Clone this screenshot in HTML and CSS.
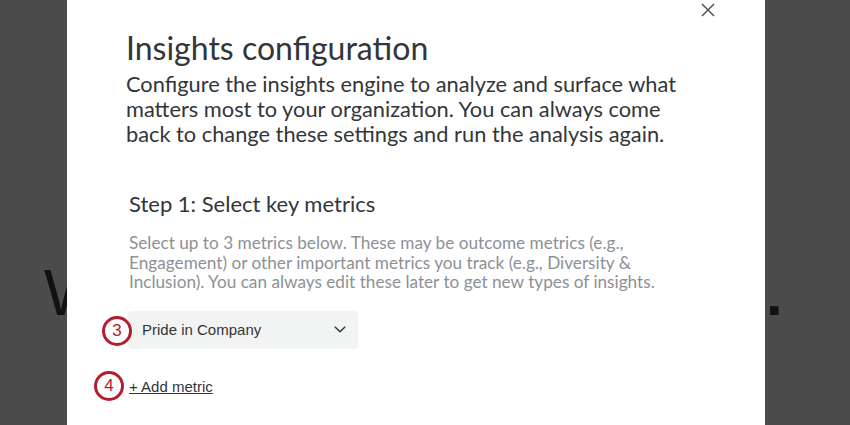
FILE: index.html
```html
<!DOCTYPE html>
<html lang="en">
<head>
<meta charset="utf-8">
<title>Insights configuration</title>
<link rel="stylesheet" href="styles.css">
</head>
<body>
<div class="backdrop">
  <span class="bg-letter">W</span>
  <span class="bg-dot">.</span>
</div>
<div class="modal">
  <button class="close" aria-label="Close">
    <svg width="14" height="14" viewBox="0 0 14 14"><path d="M1 1 L13 13 M13 1 L1 13" stroke="#545454" stroke-width="1.5" fill="none"/></svg>
  </button>
  <h1 class="title">Insights configuration</h1>
  <p class="desc">Configure the insights engine to analyze and surface what matters most to your organization. You can always come back to change these settings and run the analysis again.</p>
  <section class="step">
    <h2 class="step-title">Step 1: Select key metrics</h2>
    <p class="step-help">Select up to 3 metrics below. These may be outcome metrics (e.g., Engagement) or other important metrics you track (e.g., Diversity &amp; Inclusion). You can always edit these later to get new types of insights.</p>
    <div class="metric-row">
      <span class="badge badge-3">3</span>
      <div class="select">
        <span class="select-text">Pride in Company</span>
        <svg class="chev" width="12" height="7" viewBox="0 0 12 7"><path d="M0.8 0.8 L6 5.8 L11.2 0.8" stroke="#32363a" stroke-width="1.5" fill="none"/></svg>
      </div>
    </div>
    <div class="add-row">
      <span class="badge badge-4">4</span>
      <a class="add-link" href="#">+ Add metric</a>
    </div>
  </section>
</div>
</body>
</html>
```
FILE: styles.css
```css
html, body {
  margin: 0;
  padding: 0;
  width: 850px;
  height: 425px;
  overflow: hidden;
}
body {
  background: #4b4b4b;
  position: relative;
  font-family: Lato, "Open Sans", sans-serif;
}
.backdrop {
  position: absolute;
  inset: 0;
}
.bg-letter {
  position: absolute;
  left: 44px;
  top: 261px;
  font-family: "Liberation Sans", Arial, sans-serif;
  font-size: 64px;
  line-height: 64px;
  color: #111;
}
.bg-dot {
  position: absolute;
  left: 766px;
  top: 263px;
  font-family: "Liberation Sans", Arial, sans-serif;
  font-weight: bold;
  font-size: 60px;
  line-height: 64px;
  color: #111;
}
.modal {
  position: relative;
  margin-left: 67px;
  width: 698px;
  height: 425px;
  background: #fff;
  box-sizing: border-box;
  padding: 28px 40px 0 59px;
}
.close {
  position: absolute;
  top: 3px;
  left: 634px;
  width: 14px;
  height: 14px;
  padding: 0;
  border: 0;
  background: none;
  display: block;
}
.close svg { display: block; }
.title {
  margin: 0;
  font-size: 32px;
  line-height: 40px;
  font-weight: 400;
  color: #32363a;
}
.desc {
  margin: 3px 0 0;
  font-size: 21.8px;
  line-height: 25px;
  color: #32363a;
  width: 560px;
}
.step {
  margin: 44px 0 0 3px;
}
.step-title {
  margin: 0;
  font-size: 22px;
  line-height: 28px;
  font-weight: 400;
  color: #32363a;
}
.step-help {
  margin: 15px 0 0;
  font-size: 17.2px;
  line-height: 19.5px;
  color: #8c9196;
  width: 545px;
}
.metric-row {
  position: relative;
  margin-top: 19px;
  margin-left: -1px;
}
.select {
  width: 230px;
  height: 38px;
  box-sizing: border-box;
  background: #f2f3f3;
  border-radius: 4px;
  display: flex;
  align-items: center;
  justify-content: space-between;
  padding: 0 12px 0 14px;
}
.select-text {
  font-family: "Liberation Sans", Arial, sans-serif;
  font-size: 15px;
  color: #32363a;
}
.chev { display: block; }
.badge {
  position: absolute;
  width: 30px;
  height: 30px;
  box-sizing: border-box;
  border: 3px solid #b71c2c;
  border-radius: 50%;
  background: #fff;
  color: #b71c2c;
  font-family: "Liberation Sans", Arial, sans-serif;
  font-size: 17px;
  line-height: 24px;
  text-align: center;
}
.badge-3 {
  left: -26px;
  top: 5px;
}
.add-row {
  position: relative;
  margin-top: 27px;
  line-height: 20px;
}
.badge-4 {
  left: -35px;
  top: -5px;
}
.add-link {
  font-family: "Liberation Sans", Arial, sans-serif;
  font-size: 15px;
  color: #32363a;
  text-decoration: underline;
}
```
